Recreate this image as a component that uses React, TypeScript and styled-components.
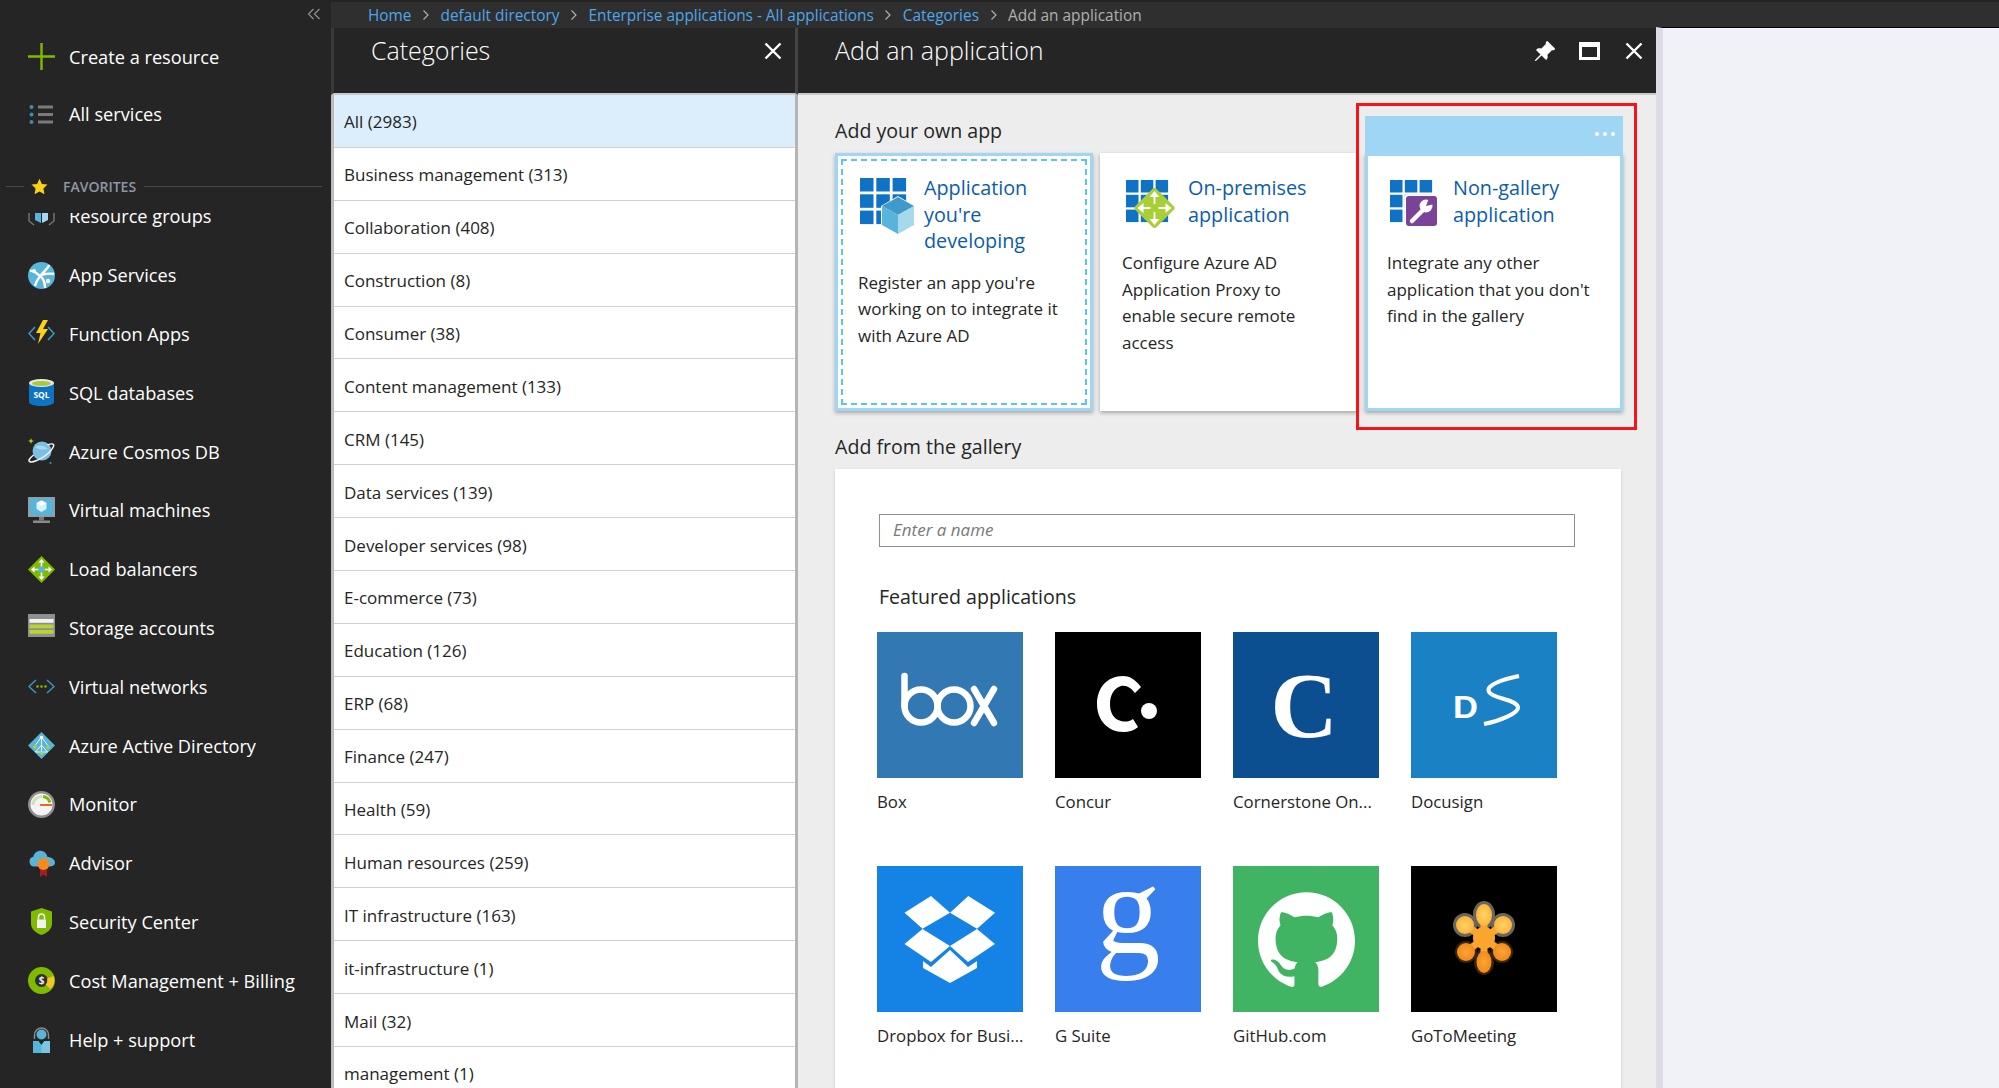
import React from "react";
import styled, { createGlobalStyle } from "styled-components";
import { BsPinAngleFill } from "react-icons/bs";
import { SiGithub } from "react-icons/si";

const FONT = `"Open Sans", "Noto Sans", sans-serif`;

const GlobalStyle = createGlobalStyle`
  html, body {
    margin: 0;
    padding: 0;
    background: #f0f2f8;
    overflow: hidden;
  }
  * {
    box-sizing: border-box;
  }
`;

/* ---------- sidebar icons ---------- */

const Ico = styled.svg.attrs({ viewBox: "0 0 27 27" })`
  width: 27px;
  height: 27px;
  flex: none;
`;

const SvgLabel = styled.text`
  font-family: ${FONT};
  font-size: 8.5px;
  font-weight: 700;
  fill: #fff;
  text-anchor: middle;
`;

const SmallDollar = styled.text`
  font-family: ${FONT};
  font-size: 10px;
  font-weight: 700;
  fill: #e8e8e8;
  text-anchor: middle;
`;

const PlusIcon = () => (
  <Ico>
    <path d="M13.5 0v27M0 13.5h27" stroke="#7fba00" strokeWidth="2.4" />
  </Ico>
);

const ListIcon = () => (
  <Ico>
    <path d="M10 6h15M10 13.5h15M10 21h15" stroke="#7a7a7a" strokeWidth="3" />
    <circle cx="3.5" cy="6" r="2" fill="#3b8fb5" />
    <circle cx="3.5" cy="13.5" r="2" fill="#3b8fb5" />
    <circle cx="3.5" cy="21" r="2" fill="#3b8fb5" />
  </Ico>
);

const GroupIcon = () => (
  <Ico>
    <path d="M1 9v9l5 4M26 9v9l-5 4" fill="none" stroke="#777" strokeWidth="1.4" />
    <path d="M7 9h6v11l-6-3z" fill="#59b4d9" />
    <path d="M14 9h6v8l-6 3z" fill="#a5d8ef" />
  </Ico>
);

const GlobeIcon = () => (
  <Ico>
    <circle cx="13.5" cy="13.5" r="13.5" fill="#59b4d9" />
    <path
      d="M2 9c5-1 7 3 10 5s5 6 5 12M21 3c-1 4-5 6-8 10s-5 6-6 11M13 13c4-1 9-2 13-1"
      fill="none"
      stroke="#fff"
      strokeWidth="2.4"
    />
    <circle cx="6" cy="9" r="2" fill="#fff" />
    <circle cx="20" cy="19" r="2.2" fill="#fff" />
  </Ico>
);

const FunctionIcon = () => (
  <Ico>
    <path d="M7 7l-6 6.5 6 6.5M20 7l6 6.5-6 6.5" fill="none" stroke="#3999c6" strokeWidth="1.6" />
    <path d="M15 0h5l-5 9h5L10 24l2.5-11H8z" fill="#fcd116" />
  </Ico>
);

const SqlIcon = () => (
  <Ico>
    <path d="M1 4v19c0 2.400 5.500 4 12.500 4S26 25.400 26 23V4z" fill="#0f73c4" />
    <ellipse cx="13.5" cy="4" rx="12.500" ry="4" fill="#e8e8e8" />
    <ellipse cx="13.5" cy="4.500" rx="9.500" ry="2.600" fill="#a9c93a" />
    <SvgLabel x="13.5" y="19">SQL</SvgLabel>
  </Ico>
);

const CosmosIcon = () => (
  <Ico>
    <circle cx="14" cy="13" r="9.500" fill="#7cbfe3" />
    <path d="M7 9c4-2 9-2 13 2-3 1-9 1-13-2z" fill="#a7d8f0" />
    <path
      d="M5.500 17C2 20 0 22.500 1.500 23.500c2.500 1.500 10-1.500 16-6s9-9.500 8-11c-.8-1-3.500-.5-6 .5"
      fill="none"
      stroke="#f2f2f2"
      strokeWidth="1.5"
    />
    <path d="M3 0l.8 2.200L6 3l-2.200.8L3 6l-.8-2.200L0 3l2.200-.8z" fill="#b8d432" />
    <circle cx="22.500" cy="25" r="1.100" fill="#3999c6" />
  </Ico>
);

const VmIcon = () => (
  <Ico>
    <rect x="0" y="0" width="27" height="20" fill="#9a9a9a" />
    <rect x="1.5" y="1.5" width="24" height="17" fill="#59b4d9" />
    <path d="M13.500 3.500l5 2.500v6l-5 3-5-3V6z" fill="#d8f0fa" />
    <path d="M13.500 3.500l5 2.500-5 2.700-5-2.700z" fill="#fff" />
    <rect x="11" y="20" width="5" height="3.5" fill="#777" />
    <rect x="5" y="23.5" width="17" height="2.5" fill="#8a8a8a" />
  </Ico>
);

const BalancerIcon = () => (
  <Ico>
    <path d="M13.500 0L27 13.500 13.500 27 0 13.500z" fill="#7fba00" />
    <path d="M13.500 4v19M4 13.500h19" stroke="#fff" strokeWidth="1.6" />
    <path d="M13.500 3l3 3.500h-6zM13.500 24l3-3.500h-6zM3 13.500l3.500-3v6zM24 13.500l-3.500-3v6z" fill="#fff" />
    <circle cx="13.5" cy="13.5" r="3.3" fill="#59b4d9" />
  </Ico>
);

const StorageIcon = () => (
  <Ico>
    <rect x="0" y="0" width="27" height="23" fill="#8f8f8f" />
    <rect x="1.5" y="5" width="24" height="3.8" fill="#f2f2f2" />
    <rect x="1.5" y="10.5" width="24" height="3.8" fill="#b8d432" />
    <rect x="1.5" y="16" width="24" height="3.8" fill="#b8d432" />
  </Ico>
);

const NetworkIcon = () => (
  <Ico>
    <path d="M8 7l-7 6.500 7 6.500M19 7l7 6.500-7 6.500" fill="none" stroke="#3999c6" strokeWidth="1.4" />
    <circle cx="9.5" cy="13.5" r="1.3" fill="#7fba00" />
    <circle cx="13.5" cy="13.5" r="1.3" fill="#7fba00" />
    <circle cx="17.5" cy="13.5" r="1.3" fill="#7fba00" />
  </Ico>
);

const DirectoryIcon = () => (
  <Ico>
    <path d="M13.500 0L27 13.500 13.500 27 0 13.500z" fill="#59b4d9" />
    <path d="M13.500 5v15M13.500 13l-6 7h12zM13.500 5l-6 8M13.500 5l6 8" fill="none" stroke="#e6f6fd" strokeWidth="1" />
    <circle cx="13.5" cy="5.5" r="1.8" fill="#fff" />
    <circle cx="7" cy="15" r="1.8" fill="#b8d432" />
    <circle cx="20" cy="15" r="1.8" fill="#b8d432" />
    <circle cx="13.5" cy="21" r="1.8" fill="#b8d432" />
  </Ico>
);

const GaugeIcon = () => (
  <Ico>
    <circle cx="13.5" cy="13.5" r="13.5" fill="#8f8f8f" />
    <circle cx="13.5" cy="13.5" r="11" fill="#f4f4f4" />
    <path d="M5 14a8.500 8.500 0 0 1 9-8.500" fill="none" stroke="#cfe3b4" strokeWidth="3" />
    <path d="M15 5.500a8.500 8.500 0 0 1 7 6" fill="none" stroke="#7fba00" strokeWidth="3" />
    <path d="M12 14h12" stroke="#e8672a" strokeWidth="2" />
  </Ico>
);

const AdvisorIcon = () => (
  <Ico>
    <path
      d="M6 16.500a5 5 0 0 1-.8-9.800C6.500 2.500 10 0 14 1c3 .7 5 3 5.500 6 4 0 7.500 2.500 7.500 5.500s-3 4-6 4z"
      fill="#59b4d9"
    />
    <path d="M12 18h7v9l-3.500-2.500L12 27z" fill="#a31f1f" />
    <circle cx="15.5" cy="14" r="6" fill="#f58a1f" />
  </Ico>
);

const ShieldIcon = () => (
  <Ico>
    <path d="M13.500 0l10.500 3.500v12c0 6-5 9.500-10.500 11.500C8 25 3 21.500 3 15.500v-12z" fill="#7fba00" />
    <path d="M9 11.500h9V20H9z" fill="#f2f2f2" />
    <path d="M10.500 11.500V9a3 3 0 0 1 6 0v2.500" fill="none" stroke="#f2f2f2" strokeWidth="1.5" />
  </Ico>
);

const CostIcon = () => (
  <Ico>
    <circle cx="13.5" cy="13.5" r="10" fill="#2e2e2e" stroke="#7fba00" strokeWidth="7" />
    <path d="M25.500 9a13 13 0 0 1-3 13l-5-4.500a6 6 0 0 0 1.500-6z" fill="#f5c42c" />
    <SmallDollar x="13.5" y="17">$</SmallDollar>
  </Ico>
);

const HelpIcon = () => (
  <Ico>
    <path d="M6.500 13V9a7 7 0 0 1 14 0v4" fill="none" stroke="#8a8a8a" strokeWidth="1.5" />
    <circle cx="13.5" cy="8.5" r="5" fill="#59b4d9" />
    <path d="M5 15h5.500l3 4 3-4H22v12H5z" fill="#59b4d9" />
    <path d="M13.500 19v8H22V15h-5.500z" fill="#7cc4e3" />
  </Ico>
);

const favorites: Array<[string, React.ComponentType]> = [
  ["Resource groups", GroupIcon],
  ["App Services", GlobeIcon],
  ["Function Apps", FunctionIcon],
  ["SQL databases", SqlIcon],
  ["Azure Cosmos DB", CosmosIcon],
  ["Virtual machines", VmIcon],
  ["Load balancers", BalancerIcon],
  ["Storage accounts", StorageIcon],
  ["Virtual networks", NetworkIcon],
  ["Azure Active Directory", DirectoryIcon],
  ["Monitor", GaugeIcon],
  ["Advisor", AdvisorIcon],
  ["Security Center", ShieldIcon],
  ["Cost Management + Billing", CostIcon],
  ["Help + support", HelpIcon],
];

const categories = [
  "All (2983)",
  "Business management (313)",
  "Collaboration (408)",
  "Construction (8)",
  "Consumer (38)",
  "Content management (133)",
  "CRM (145)",
  "Data services (139)",
  "Developer services (98)",
  "E-commerce (73)",
  "Education (126)",
  "ERP (68)",
  "Finance (247)",
  "Health (59)",
  "Human resources (259)",
  "IT infrastructure (163)",
  "it-infrastructure (1)",
  "Mail (32)",
  "management (1)",
];

/* ---------- card pictures ---------- */

const CardPicture = styled.svg.attrs({ viewBox: "0 0 66 60" })`
  width: 66px;
  height: 60px;
  flex: none;
`;

function Squares({ x, y, size, step }: { x: number; y: number; size: number; step: number }) {
  const cells = [];
  for (let r = 0; r < 3; r++) {
    for (let c = 0; c < 3; c++) {
      cells.push(<rect key={`${r}${c}`} x={x + c * step} y={y + r * step} width={size} height={size} fill="#0f72c4" />);
    }
  }
  return <>{cells}</>;
}

const DevelopingPicture = () => (
  <CardPicture>
    <Squares x={2} y={3} size={13.5} step={16.3} />
    <path d="M40 21l17 10v20l-17 9-17-9V31z" fill="#fff" />
    <path d="M40 22l16 9-16 9-16-9z" fill="#3f9ac9" />
    <path d="M24 31l16 9v19l-16-9z" fill="#59b4d9" />
    <path d="M56 31l-16 9v19l16-9z" fill="#a8d8ec" />
  </CardPicture>
);

const OnPremPicture = () => (
  <CardPicture>
    <Squares x={4} y={5} size={12.5} step={14.8} />
    <rect x="17.5" y="18" width="30" height="30" rx="3" transform="rotate(45 32.5 33)" fill="#a9cf38" />
    <path d="M32.500 20v26M19.500 33h26" stroke="#fff" strokeWidth="1.8" />
    <path d="M27.500 22l5-6 5 6zM27.500 44l5 6 5-6zM21.500 28l-6 5 6 5zM43.500 28l6 5-6 5z" fill="#fff" />
    <rect x="28.5" y="29" width="8" height="8" fill="#a9cf38" />
  </CardPicture>
);

const NonGalleryPicture = () => (
  <CardPicture>
    <Squares x={3} y={5} size={12.5} step={14.8} />
    <rect x="17.5" y="19.5" width="34" height="33" rx="3" fill="#fff" />
    <rect x="19" y="21" width="31" height="30" rx="3" fill="#7b4397" />
    <path d="M25 46l12-12" stroke="#fff" strokeWidth="4.5" strokeLinecap="round" />
    <circle cx="39" cy="31" r="6.5" fill="#fff" />
    <path d="M39 31l3-8 6 6z" fill="#7b4397" />
  </CardPicture>
);

/* ---------- app logos ---------- */

const LogoSvg = styled.svg.attrs({ viewBox: "0 0 146 146" })`
  width: 146px;
  height: 146px;
`;

const LogoLetter = styled.text`
  font-family: "Liberation Sans", sans-serif;
  font-size: 31px;
  font-weight: 700;
  fill: #fff;
`;

const SerifLetter = styled.text<{ $size: number; $bold?: boolean }>`
  font-family: "Liberation Serif", serif;
  font-size: ${({ $size }) => $size}px;
  font-weight: ${({ $bold }) => ($bold ? 700 : 400)};
  fill: #fff;
  text-anchor: middle;
`;

const BoxLogo = () => (
  <LogoSvg>
    <g fill="none" stroke="#fff" strokeWidth="6.5" strokeLinecap="round">
      <path d="M27.500 44v30" />
      <circle cx="44" cy="74" r="16.5" />
      <circle cx="77" cy="74" r="16.5" />
      <path d="M97 57l20 34M117 57L97 91" />
    </g>
  </LogoSvg>
);

const ConcurLogo = () => (
  <LogoSvg>
    <path
      d="M86 55C80 47 74 44 68 44 52 44 42 56 42 72c0 16 11 28 26 28 6 0 12-2 15-5l-5-8c-4 3-8 3-12 2-8-2-11-9-11-17 0-9 4-16 11-18 6-1 10 2 14 7z"
      fill="#fff"
    />
    <circle cx="94" cy="79" r="8" fill="#fff" />
  </LogoSvg>
);

const CornerstoneLogo = () => (
  <LogoSvg>
    <SerifLetter x="71" y="105" $size={93} $bold>
      C
    </SerifLetter>
  </LogoSvg>
);

const DocusignLogo = () => (
  <LogoSvg>
    <LogoLetter x="42" y="86" textLength={25} lengthAdjust="spacingAndGlyphs">
      D
    </LogoLetter>
    <path d="M108 44C93 47 74 53 78 60c4 7 27 7 29 15 1 6-18 14-34 17" fill="none" stroke="#fff" strokeWidth="4" />
  </LogoSvg>
);

const DropboxLogo = () => (
  <LogoSvg>
    <g fill="#fff">
      <path d="M27.500 46.700L54 30l19 16.700-27.500 16z" />
      <path d="M73 46.700L91.300 30 118 46.700l-18 16z" />
      <path d="M27.500 78l18-15L73 80 54 96z" />
      <path d="M73 80l27-17 18 15-27 18z" />
      <path d="M46 95l8 6 19-17 18 17 9-6v7l-27 15-27-15z" />
    </g>
  </LogoSvg>
);

const GoogleLogo = () => (
  <LogoSvg>
    <SerifLetter x="73" y="87" $size={130}>
      g
    </SerifLetter>
  </LogoSvg>
);

const OctocatLogo = styled(SiGithub)`
  width: 97px;
  height: 97px;
  color: #fff;
`;

const MeetingLogo = () => (
  <LogoSvg>
    <defs>
      <radialGradient id="petalGold">
        <stop offset="0" stopColor="#ffd466" />
        <stop offset="1" stopColor="#fcb53c" />
      </radialGradient>
      <radialGradient id="petalOrange">
        <stop offset="0" stopColor="#fda532" />
        <stop offset="1" stopColor="#f28a1e" />
      </radialGradient>
    </defs>
    <ellipse cx="73" cy="49" rx="11" ry="14" fill="#6b655c" />
    <circle cx="54" cy="59" r="12" fill="#6b655c" />
    <circle cx="92" cy="59" r="12" fill="#6b655c" />
    <circle cx="55" cy="86" r="11" fill="#3a2508" />
    <circle cx="91" cy="86" r="11" fill="#3a2508" />
    <ellipse cx="73" cy="96" rx="10" ry="13" fill="#3a2508" />
    <path d="M73 72V49M73 72L54 59M73 72L92 59M73 72L55 86M73 72L91 86M73 72V96" stroke="#f9a52e" strokeWidth="7" />
    <circle cx="73" cy="72" r="11" fill="#f9a52e" />
    <ellipse cx="73" cy="49" rx="8" ry="11" fill="url(#petalGold)" />
    <circle cx="54" cy="59" r="9" fill="url(#petalGold)" />
    <circle cx="92" cy="59" r="9" fill="url(#petalGold)" />
    <circle cx="55" cy="86" r="9" fill="url(#petalOrange)" />
    <circle cx="91" cy="86" r="9" fill="url(#petalOrange)" />
    <ellipse cx="73" cy="96" rx="7.5" ry="11" fill="url(#petalOrange)" />
  </LogoSvg>
);

const tiles: Array<{ name: string; bg: string; logo: React.ReactNode }> = [
  { name: "Box", bg: "#3278b3", logo: <BoxLogo /> },
  { name: "Concur", bg: "#000", logo: <ConcurLogo /> },
  { name: "Cornerstone On...", bg: "#0b4f91", logo: <CornerstoneLogo /> },
  { name: "Docusign", bg: "#1a81c5", logo: <DocusignLogo /> },
  { name: "Dropbox for Busi...", bg: "#1583e6", logo: <DropboxLogo /> },
  { name: "G Suite", bg: "#387eed", logo: <GoogleLogo /> },
  { name: "GitHub.com", bg: "#41b463", logo: <OctocatLogo /> },
  { name: "GoToMeeting", bg: "#000", logo: <MeetingLogo /> },
];

export default function App() {
  return (
    <Page>
      <GlobalStyle />
      <Sidebar>
        <CollapseRow>
          <svg width="14" height="12" viewBox="0 0 14 12">
            <path d="M6.500 1L1.500 6l5 5M12.500 1l-5 5 5 5" fill="none" stroke="#8c8c8c" strokeWidth="1.3" />
          </svg>
        </CollapseRow>
        <MenuItem $height={57.5}>
          <PlusIcon />
          Create a resource
        </MenuItem>
        <MenuItem $height={57.5}>
          <ListIcon />
          All services
        </MenuItem>
        <FavoritesRule>
          <svg width="17" height="17" viewBox="0 0 24 24">
            <path d="M12 1l3.400 7.300 7.900 1-5.800 5.500 1.500 8L12 18.900 5 22.800l1.500-8L.7 9.300l7.900-1z" fill="#fcd116" />
          </svg>
          <span>FAVORITES</span>
        </FavoritesRule>
        <FavoritesScroll>
          <FavoritesList>
            {favorites.map(([label, Icon]) => (
              <MenuItem key={label} $height={58.8}>
                <Icon />
                {label}
              </MenuItem>
            ))}
          </FavoritesList>
        </FavoritesScroll>
      </Sidebar>

      <Main>
        <Breadcrumbs>
          <Crumb href="#">Home</Crumb>
          <Sep />
          <Crumb href="#">default directory</Crumb>
          <Sep />
          <Crumb href="#">Enterprise applications - All applications</Crumb>
          <Sep />
          <Crumb href="#">Categories</Crumb>
          <Sep />
          <CurrentCrumb>Add an application</CurrentCrumb>
        </Breadcrumbs>

        <Blades>
          <CategoriesBlade>
            <CategoriesHeader>
              <BladeTitle>Categories</BladeTitle>
              <CloseIcon />
            </CategoriesHeader>
            <CategoryList>
              {categories.map((c, i) => (
                <CategoryRow key={c} $active={i === 0}>
                  {c}
                </CategoryRow>
              ))}
            </CategoryList>
          </CategoriesBlade>

          <AddBlade>
            <AddHeader>
              <BladeTitle>Add an application</BladeTitle>
              <HeaderActions>
                <PinIcon />
                <svg width="21" height="18" viewBox="0 0 21 18">
                  <path d="M0 0h21v18H0zM3 5v10h15V5z" fill="#fff" fillRule="evenodd" />
                </svg>
                <CloseIcon />
              </HeaderActions>
            </AddHeader>

            <AddBody>
              <SectionHeading>Add your own app</SectionHeading>
              <CardRow>
                <AppCard $focused>
                  <CardHead>
                    <DevelopingPicture />
                    <CardTitle>Application you're developing</CardTitle>
                  </CardHead>
                  <CardText>Register an app you're working on to integrate it with Azure AD</CardText>
                </AppCard>
                <AppCard>
                  <CardHead>
                    <OnPremPicture />
                    <CardTitle>On-premises application</CardTitle>
                  </CardHead>
                  <CardText>Configure Azure AD Application Proxy to enable secure remote access</CardText>
                </AppCard>
                <AppCard $hovered>
                  <HoverBar>
                    <span />
                    <span />
                    <span />
                  </HoverBar>
                  <CardHead>
                    <NonGalleryPicture />
                    <CardTitle>Non-gallery application</CardTitle>
                  </CardHead>
                  <CardText>Integrate any other application that you don't find in the gallery</CardText>
                  <RedFrame />
                </AppCard>
              </CardRow>

              <GalleryHeading>Add from the gallery</GalleryHeading>
              <Gallery>
                <NameInput placeholder="Enter a name" />
                <FeaturedHeading>Featured applications</FeaturedHeading>
                <TileGrid>
                  {tiles.map((t) => (
                    <div key={t.name}>
                      <Tile $bg={t.bg}>{t.logo}</Tile>
                      <TileName>{t.name}</TileName>
                    </div>
                  ))}
                </TileGrid>
              </Gallery>
            </AddBody>
          </AddBlade>

          <Backdrop />
        </Blades>
      </Main>
    </Page>
  );
}

function CloseIcon() {
  return (
    <svg width="18" height="18" viewBox="0 0 18 18">
      <path d="M1.500 1.500l15 15M16.500 1.500l-15 15" stroke="#fff" strokeWidth="2.4" />
    </svg>
  );
}

function Sep() {
  return (
    <svg width="8" height="12" viewBox="0 0 8 12">
      <path d="M1.500 1.500L6 6l-4.500 4.500" fill="none" stroke="#b5b5b5" strokeWidth="1.1" />
    </svg>
  );
}

const PinIcon = styled(BsPinAngleFill)`
  width: 23px;
  height: 23px;
  margin: -2px -2px 0 0;
  color: #fff;
`;

const Page = styled.div`
  width: 1999px;
  height: 1088px;
  display: flex;
  overflow: hidden;
  font-family: ${FONT};
`;

const Sidebar = styled.aside`
  width: 331px;
  flex: none;
  display: flex;
  flex-direction: column;
  background: #252525;
  color: #fff;
`;

const CollapseRow = styled.div`
  height: 28px;
  display: flex;
  align-items: center;
  justify-content: flex-end;
  padding-right: 10px;
`;

const MenuItem = styled.div<{ $height: number }>`
  height: ${({ $height }) => $height}px;
  display: flex;
  align-items: center;
  gap: 14px;
  padding-left: 28px;
  font-size: 18.2px;
  white-space: nowrap;
`;

const FavoritesRule = styled.div`
  height: 20px;
  margin: 33px 9px 0 6px;
  display: flex;
  align-items: center;
  gap: 15px;
  padding-left: 25px;
  position: relative;

  &::before,
  &::after {
    content: "";
    height: 1px;
    background: #484848;
  }
  &::before {
    position: absolute;
    left: 0;
    width: 18px;
  }
  &::after {
    flex: 1;
    margin-left: -7px;
  }

  span {
    font-size: 14px;
    font-weight: 600;
    color: #8d97a5;
  }
`;

const FavoritesScroll = styled.div`
  margin-top: 17px;
  flex: 1;
  overflow: hidden;
`;

const FavoritesList = styled.div`
  margin-top: -26px;
`;

const Main = styled.div`
  flex: 1;
  min-width: 0;
  display: flex;
  flex-direction: column;
`;

const Breadcrumbs = styled.nav`
  height: 28px;
  flex: none;
  display: flex;
  align-items: center;
  gap: 10.5px;
  padding-left: 37px;
  background: #2f2f2f;
  border-top: 2px solid #232323;
  font-size: 15.4px;
`;

const Crumb = styled.a`
  color: #4fa6ea;
  text-decoration: none;
`;

const CurrentCrumb = styled.span`
  color: #b0b0b0;
`;

const Blades = styled.div`
  flex: 1;
  min-height: 0;
  display: flex;
`;

const CategoriesBlade = styled.section`
  width: 467px;
  flex: none;
  display: flex;
  flex-direction: column;
  background: #fff;
`;

const BladeHeader = styled.header`
  height: 67px;
  flex: none;
  display: flex;
  justify-content: space-between;
  background: #252525;
  border-bottom: 2px solid #c9c9c9;
  color: #fff;
`;

const CategoriesHeader = styled(BladeHeader)`
  padding: 14px 13px 0 37px;
  border-left: 3px solid #3a3a3a;
  border-right: 3px solid #444;
`;

const AddHeader = styled(BladeHeader)`
  padding: 14px 13px 0 37px;
`;

const BladeTitle = styled.h2`
  margin: -10px 0 0;
  font-size: 25px;
  font-weight: 300;
  line-height: 36px;
  white-space: nowrap;
`;

const HeaderActions = styled.div`
  display: flex;
  align-items: flex-start;
  gap: 25px;
`;

const CategoryList = styled.ul`
  flex: 1;
  min-height: 0;
  margin: 0;
  padding: 0;
  list-style: none;
  overflow: hidden;
  border-left: 3px solid #bcbcbc;
  border-right: 3px solid #b5b5b5;
`;

const CategoryRow = styled.li<{ $active?: boolean }>`
  height: 52.9px;
  display: flex;
  align-items: center;
  padding: 2px 0 0 10px;
  border-bottom: 1px solid #d0d0d0;
  background: ${({ $active }) => ($active ? "#dcedfc" : "#fff")};
  color: #252525;
  font-size: 17px;
`;

const AddBlade = styled.section`
  width: 858px;
  flex: none;
  display: flex;
  flex-direction: column;
  background: #ededed;
`;

const AddBody = styled.div`
  flex: 1;
  min-height: 0;
  overflow: hidden;
  padding: 22px 0 0 37px;
`;

const SectionHeading = styled.h3`
  margin: 0;
  font-size: 19.6px;
  font-weight: 400;
  line-height: 28px;
  color: #252525;
`;

const GalleryHeading = styled(SectionHeading)`
  margin-top: 22px;
`;

const CardRow = styled.div`
  margin-top: 8px;
  display: flex;
`;

const AppCard = styled.article<{ $focused?: boolean; $hovered?: boolean }>`
  position: relative;
  width: 258px;
  height: 258px;
  flex: none;
  margin-right: 7px;
  padding: 22px 28px 0 22px;
  background: #fff;
  box-shadow: 0 2px 4px rgba(0, 0, 0, 0.3);

  ${({ $focused }) =>
    $focused &&
    `
    padding: 19px 25px 0 20px;
    border: 3px solid #9fd6f3;

    &::after {
      content: "";
      position: absolute;
      inset: 3px;
      border: 2px dashed #5cc4f0;
    }
  `}

  ${({ $hovered }) =>
    $hovered &&
    `
    padding: 22px 25px 0 19px;
    border: solid #9fd6f3;
    border-width: 0 3px 3px;
  `}
`;

const HoverBar = styled.div`
  position: absolute;
  left: -3px;
  right: -3px;
  top: -37px;
  height: 40px;
  background: #9fd6f3;
  display: flex;
  align-items: flex-start;
  justify-content: flex-end;
  gap: 4px;
  padding: 16px 8px 0 0;

  span {
    width: 4px;
    height: 4px;
    border-radius: 50%;
    background: #fff;
  }
`;

const RedFrame = styled.div`
  position: absolute;
  left: -12px;
  right: -17px;
  top: -50px;
  bottom: -22px;
  border: 3px solid #f5141c;
  pointer-events: none;
`;

const CardHead = styled.div`
  display: flex;
  min-height: 59px;
  margin-bottom: 15px;
`;

const CardTitle = styled.h4`
  margin: 0;
  font-size: 19.8px;
  font-weight: 400;
  line-height: 26.5px;
  color: #0b5cab;
`;

const CardText = styled.p`
  margin: 0;
  font-size: 17px;
  line-height: 26.5px;
  color: #252525;
`;

const Gallery = styled.div`
  width: 786px;
  margin-top: 8px;
  padding: 45px 0 120px 42px;
  background: #fff;
  box-shadow: 0 1px 3px rgba(0, 0, 0, 0.12);
`;

const NameInput = styled.input`
  display: block;
  width: 696px;
  height: 33px;
  margin-left: 2px;
  padding: 0 13px 2px;
  border: 1px solid #8f8f8f;
  background: #fff;
  font-family: ${FONT};
  font-size: 17px;

  &::placeholder {
    color: #7a7a7a;
    font-style: italic;
    opacity: 1;
  }
`;

const FeaturedHeading = styled(SectionHeading)`
  margin: 36px 0 21px 2px;
`;

const TileGrid = styled.div`
  display: grid;
  grid-template-columns: repeat(4, 146px);
  column-gap: 32px;
  row-gap: 51px;
`;

const Tile = styled.div<{ $bg: string }>`
  width: 146px;
  height: 146px;
  display: flex;
  align-items: center;
  justify-content: center;
  overflow: hidden;
  background: ${({ $bg }) => $bg};
`;

const TileName = styled.div`
  margin-top: 11px;
  height: 26px;
  font-size: 16.8px;
  line-height: 26px;
  color: #252525;
  white-space: nowrap;
`;

const Backdrop = styled.div`
  flex: 1;
  background: #f0f2f8;
  border-left: 7px solid #dcdce6;
  border-top: 1px solid #000;
  margin-top: -1px;
`;
